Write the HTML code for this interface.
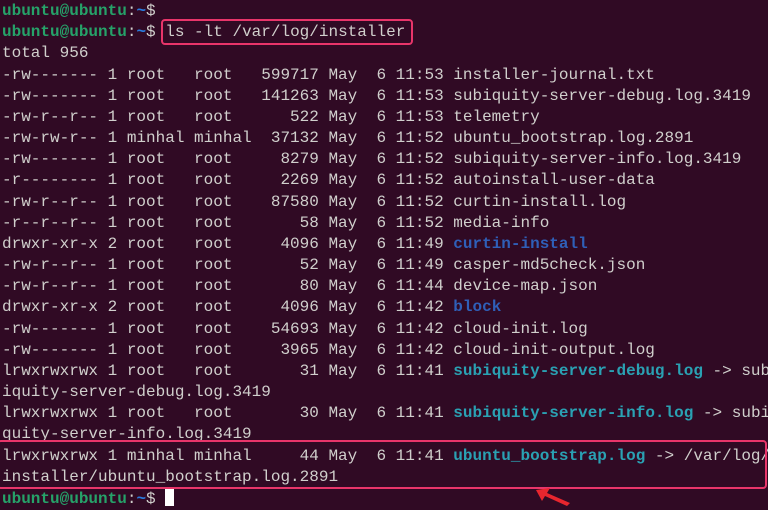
<!DOCTYPE html>
<html><head><style>
html,body{margin:0;padding:0;width:768px;height:509px;overflow:hidden;background:#300a24;}
pre{margin:0;position:absolute;left:2px;top:1px;font-family:"Liberation Mono",monospace;font-size:16px;line-height:21.17px;color:#d0cfcc;white-space:pre;}
.g{color:#26a269;font-weight:bold}.bl{color:#2a7bde;font-weight:bold}
.d{color:#2f5fb8;font-weight:bold}.c{color:#2aa1b3;font-weight:bold}
.box{position:absolute;border:2px solid #e8356a;border-radius:4px;}
.cur{display:inline-block;width:9px;height:18px;background:#fff;vertical-align:-3px}
</style></head><body>
<pre><span class="g">ubuntu@ubuntu</span>:<span class="bl">~</span>$
<span class="g">ubuntu@ubuntu</span>:<span class="bl">~</span>$ ls -lt /var/log/installer
total 956
-rw------- 1 root   root   599717 May  6 11:53 installer-journal.txt
-rw------- 1 root   root   141263 May  6 11:53 subiquity-server-debug.log.3419
-rw-r--r-- 1 root   root      522 May  6 11:53 telemetry
-rw-rw-r-- 1 minhal minhal  37132 May  6 11:52 ubuntu_bootstrap.log.2891
-rw------- 1 root   root     8279 May  6 11:52 subiquity-server-info.log.3419
-r-------- 1 root   root     2269 May  6 11:52 autoinstall-user-data
-rw-r--r-- 1 root   root    87580 May  6 11:52 curtin-install.log
-r--r--r-- 1 root   root       58 May  6 11:52 media-info
drwxr-xr-x 2 root   root     4096 May  6 11:49 <span class="d">curtin-install</span>
-rw-r--r-- 1 root   root       52 May  6 11:49 casper-md5check.json
-rw-r--r-- 1 root   root       80 May  6 11:44 device-map.json
drwxr-xr-x 2 root   root     4096 May  6 11:42 <span class="d">block</span>
-rw------- 1 root   root    54693 May  6 11:42 cloud-init.log
-rw------- 1 root   root     3965 May  6 11:42 cloud-init-output.log
lrwxrwxrwx 1 root   root       31 May  6 11:41 <span class="c">subiquity-server-debug.log</span> -> sub
iquity-server-debug.log.3419
lrwxrwxrwx 1 root   root       30 May  6 11:41 <span class="c">subiquity-server-info.log</span> -> subi
quity-server-info.log.3419
lrwxrwxrwx 1 minhal minhal     44 May  6 11:41 <span class="c">ubuntu_bootstrap.log</span> -> /var/log/
installer/ubuntu_bootstrap.log.2891
<span class="g">ubuntu@ubuntu</span>:<span class="bl">~</span>$ <span class="cur"></span></pre>
<div class="box" style="left:161px;top:19px;width:248px;height:22px"></div>
<div class="box" style="left:-3px;top:440px;width:766px;height:45px"></div>
<svg style="position:absolute;left:530px;top:484px" width="45" height="25"><path d="M6 6 L20 4 L17 9 L40 19 L37 22 L15 12 L12 17 Z" fill="#e8262e"/></svg>
</body></html>
